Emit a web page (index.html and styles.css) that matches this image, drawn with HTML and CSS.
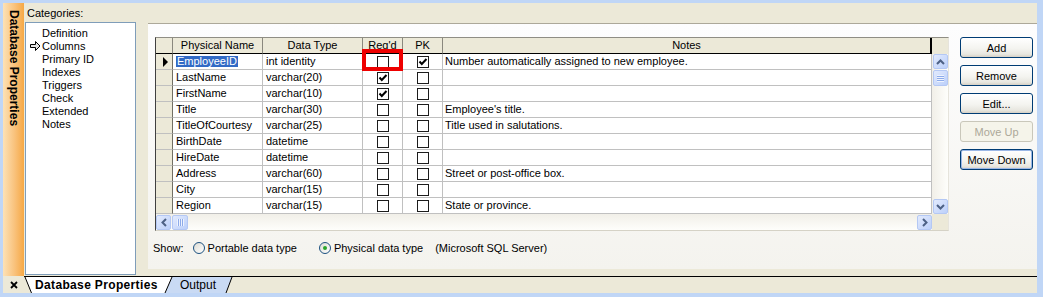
FILE: index.html
```html
<!DOCTYPE html>
<html lang="en">
<head>
    <meta charset="UTF-8">
    <meta name="viewport" content="width=device-width, initial-scale=1.0">
    <title>Database Properties</title>
    <link rel="stylesheet" href="styles.css">
</head>
<body>
<div class="window">
    <div class="main">
        <div class="side-tab"><span>Database Properties</span></div>
        <div class="content">
            <div class="categories">
                <div class="cat-label">Categories:</div>
                <ul class="cat-list">
                    <li><span class="marker"></span>Definition</li>
                    <li><span class="marker"><svg width="11" height="10" viewBox="0 0 11 10"><path d="M0.5 3.5 H5.5 V0.5 L10 5 L5.5 9.5 V6.5 H0.5 Z" fill="#e4e4e4" stroke="#000"/></svg></span>Columns</li>
                    <li><span class="marker"></span>Primary ID</li>
                    <li><span class="marker"></span>Indexes</li>
                    <li><span class="marker"></span>Triggers</li>
                    <li><span class="marker"></span>Check</li>
                    <li><span class="marker"></span>Extended</li>
                    <li><span class="marker"></span>Notes</li>
                </ul>
            </div>
            <div class="panel">
                <div class="grid-area">
                    <div class="grid">
                        <div class="grid-top">
                            <div class="cells">
                                <div class="row head">
                                    <div class="cell"></div>
                                    <div class="cell">Physical Name</div>
                                    <div class="cell">Data Type</div>
                                    <div class="cell">Req'd</div>
                                    <div class="cell">PK</div>
                                    <div class="cell notes">Notes</div>
                                </div>
                                <div class="row">
                                    <div class="cell rowhead"><svg width="6" height="10" viewBox="0 0 6 10"><polygon points="0,0 5,5 0,10" fill="#000"/></svg></div>
                                    <div class="cell"><span class="selected">EmployeeID</span></div>
                                    <div class="cell">int identity</div>
                                    <div class="cell check marked"><span class="chk"></span><span class="callout"></span></div>
                                    <div class="cell check"><span class="chk"><svg width="10" height="10" viewBox="0 0 10 10"><path d="M1.5 4.5 L3.8 7 L8.5 2"/></svg></span></div>
                                    <div class="cell notes">Number automatically assigned to new employee.</div>
                                </div>
                                <div class="row">
                                    <div class="cell rowhead"></div>
                                    <div class="cell">LastName</div>
                                    <div class="cell">varchar(20)</div>
                                    <div class="cell check"><span class="chk"><svg width="10" height="10" viewBox="0 0 10 10"><path d="M1.5 4.5 L3.8 7 L8.5 2"/></svg></span></div>
                                    <div class="cell check"><span class="chk"></span></div>
                                    <div class="cell notes"></div>
                                </div>
                                <div class="row">
                                    <div class="cell rowhead"></div>
                                    <div class="cell">FirstName</div>
                                    <div class="cell">varchar(10)</div>
                                    <div class="cell check"><span class="chk"><svg width="10" height="10" viewBox="0 0 10 10"><path d="M1.5 4.5 L3.8 7 L8.5 2"/></svg></span></div>
                                    <div class="cell check"><span class="chk"></span></div>
                                    <div class="cell notes"></div>
                                </div>
                                <div class="row">
                                    <div class="cell rowhead"></div>
                                    <div class="cell">Title</div>
                                    <div class="cell">varchar(30)</div>
                                    <div class="cell check"><span class="chk"></span></div>
                                    <div class="cell check"><span class="chk"></span></div>
                                    <div class="cell notes">Employee's title.</div>
                                </div>
                                <div class="row">
                                    <div class="cell rowhead"></div>
                                    <div class="cell">TitleOfCourtesy</div>
                                    <div class="cell">varchar(25)</div>
                                    <div class="cell check"><span class="chk"></span></div>
                                    <div class="cell check"><span class="chk"></span></div>
                                    <div class="cell notes">Title used in salutations.</div>
                                </div>
                                <div class="row">
                                    <div class="cell rowhead"></div>
                                    <div class="cell">BirthDate</div>
                                    <div class="cell">datetime</div>
                                    <div class="cell check"><span class="chk"></span></div>
                                    <div class="cell check"><span class="chk"></span></div>
                                    <div class="cell notes"></div>
                                </div>
                                <div class="row">
                                    <div class="cell rowhead"></div>
                                    <div class="cell">HireDate</div>
                                    <div class="cell">datetime</div>
                                    <div class="cell check"><span class="chk"></span></div>
                                    <div class="cell check"><span class="chk"></span></div>
                                    <div class="cell notes"></div>
                                </div>
                                <div class="row">
                                    <div class="cell rowhead"></div>
                                    <div class="cell">Address</div>
                                    <div class="cell">varchar(60)</div>
                                    <div class="cell check"><span class="chk"></span></div>
                                    <div class="cell check"><span class="chk"></span></div>
                                    <div class="cell notes">Street or post-office box.</div>
                                </div>
                                <div class="row">
                                    <div class="cell rowhead"></div>
                                    <div class="cell">City</div>
                                    <div class="cell">varchar(15)</div>
                                    <div class="cell check"><span class="chk"></span></div>
                                    <div class="cell check"><span class="chk"></span></div>
                                    <div class="cell notes"></div>
                                </div>
                                <div class="row">
                                    <div class="cell rowhead"></div>
                                    <div class="cell">Region</div>
                                    <div class="cell">varchar(15)</div>
                                    <div class="cell check"><span class="chk"></span></div>
                                    <div class="cell check"><span class="chk"></span></div>
                                    <div class="cell notes">State or province.</div>
                                </div>
                            </div>
                            <div class="vscroll">
                                <div class="vs-head"></div>
                                <div class="sb-btn"><svg width="9" height="6" viewBox="0 0 9 6"><path d="M1 5 L4.5 1.5 L8 5"/></svg></div>
                                <div class="sb-thumb"><span class="grip"></span></div>
                                <div class="sb-track"></div>
                                <div class="sb-btn"><svg width="9" height="6" viewBox="0 0 9 6"><path d="M1 1 L4.5 4.5 L8 1"/></svg></div>
                            </div>
                        </div>
                        <div class="hscroll-row">
                            <div class="hscroll">
                                <div class="sb-btn"><svg width="6" height="9" viewBox="0 0 6 9"><path d="M5 1 L1.5 4.5 L5 8"/></svg></div>
                                <div class="sb-thumb"><span class="grip"></span></div>
                                <div class="sb-track"></div>
                                <div class="sb-btn"><svg width="6" height="9" viewBox="0 0 6 9"><path d="M1 1 L4.5 4.5 L1 8"/></svg></div>
                            </div>
                            <div class="corner"></div>
                        </div>
                    </div>
                    <div class="show-row">
                        <span class="show-label">Show:</span>
                        <span class="radio"></span>
                        <span class="radio-text">Portable data type</span>
                        <span class="radio on"></span>
                        <span class="radio-text">Physical data type</span>
                        <span class="server">(Microsoft SQL Server)</span>
                    </div>
                </div>
                <div class="buttons">
                    <button class="btn">Add</button>
                    <button class="btn">Remove</button>
                    <button class="btn">Edit...</button>
                    <button class="btn" disabled>Move Up</button>
                    <button class="btn default">Move Down</button>
                </div>
            </div>
        </div>
    </div>
    <div class="tabstrip">
        <div class="close-cell"><svg width="8" height="8" viewBox="0 0 8 8"><path d="M1 1 L7 7 M7 1 L1 7" stroke="#000" stroke-width="1.8"/></svg></div>
        <div class="tabs">
            <svg class="tab-shapes" width="240" height="16" viewBox="0 0 240 16">
                <polygon points="1,0 7.5,16 141,16 148,0" fill="#fff"/>
                <polygon points="141,16 148,0 208,0 202,16" fill="#c9daf4"/>
                <path d="M1 0 L7.5 16 M141 16 L148 0 M208 0 L202 16" stroke="#000" fill="none"/>
            </svg>
            <span class="tab active">Database Properties</span>
            <span class="tab">Output</span>
        </div>
    </div>
</div>
</body>
</html>
```

FILE: styles.css
```css
body {
    margin: 0;
    background-color: #c0d6f6;
    font-family: "Liberation Sans", Arial, sans-serif;
    font-size: 11px;
    color: #000;
}
.window {
    width: 1043px;
    height: 297px;
    box-sizing: border-box;
    padding: 3px 6px 4px 3px;
    display: flex;
    flex-direction: column;
}
.main {
    display: flex;
    height: 273px;
}
.side-tab {
    width: 21px;
    box-sizing: border-box;
    padding-top: 7px;
    display: flex;
    justify-content: center;
    background: linear-gradient(to right, #fde2b6, #f9c27c 55%, #f6a845);
}
.side-tab span {
    writing-mode: vertical-rl;
    font-weight: bold;
    font-size: 12px;
    line-height: 14px;
}
.content {
    flex: 1;
    display: flex;
    background-color: #ece9d8;
}

/* categories list */
.categories {
    width: 112px;
    display: flex;
    flex-direction: column;
}
.cat-label {
    padding: 4px 0 0 3px;
    line-height: 13px;
}
.cat-list {
    flex: 1;
    margin: 2px 0 1px 1px;
    padding: 3px 0 0 0;
    list-style: none;
    background-color: #fff;
    border: 1px solid #7f9db9;
}
.cat-list li {
    display: flex;
    align-items: center;
    height: 13px;
}
.marker {
    width: 16px;
    flex: none;
    display: flex;
}
.marker svg {
    margin-left: 4px;
}

/* columns page */
.panel {
    flex: 1;
    margin: 20px 0 7px 12px;
    padding: 13px 4px 0 7px;
    border-top: 1px solid #aca899;
    background: linear-gradient(#fdfdfe, #f4f3ee);
    display: flex;
    align-items: flex-start;
}
.grid-area {
    width: 794px;
}
.grid {
    height: 194px;
    box-sizing: border-box;
    border: 1px solid;
    border-color: #8f8d84 #e6e4dc #d5d2c6 #404040;
    background-color: #fff;
    display: flex;
    flex-direction: column;
}
.grid-top {
    display: flex;
    height: 176px;
}
.cells {
    width: 776px;
}
.row {
    display: grid;
    grid-template-columns: 17px 90px 100px 40px 40px 489px;
    height: 16px;
}
.cell {
    box-sizing: border-box;
    border-right: 1px solid #c0c0c0;
    border-bottom: 1px solid #c0c0c0;
    padding-left: 3px;
    line-height: 15px;
    white-space: nowrap;
    overflow: hidden;
}
.cell.notes {
    padding-left: 2px;
}
.row.head .cell {
    background-color: #ece9d8;
    border-right-color: #8a887e;
    border-bottom-color: #000;
    padding: 0;
    text-align: center;
}
.row.head .cell.notes {
    border-right: 2px solid #000;
}
.rowhead {
    background-color: #ece9d8;
    border-right-color: #716f64 !important;
    display: flex;
    align-items: center;
    padding: 0 0 0 7px;
}
.selected {
    display: inline-block;
    line-height: 11px;
    padding: 0 1px;
    background-color: #316ac5;
    color: #fff;
}
.cell.check {
    display: flex;
    align-items: center;
    justify-content: center;
    padding: 0;
}
.chk {
    width: 12px;
    height: 12px;
    box-sizing: border-box;
    border: 1px solid #1c1c1c;
    background-color: #fff;
    display: flex;
}
.chk path {
    fill: none;
    stroke: #000;
    stroke-width: 2;
}
.cell.marked {
    position: relative;
    overflow: visible;
}
.callout {
    position: absolute;
    left: -1px;
    top: -5px;
    width: 41px;
    height: 22px;
    box-sizing: border-box;
    border: 4px solid #ee0000;
    z-index: 1;
}

/* scrollbars */
.vscroll {
    width: 16px;
    display: flex;
    flex-direction: column;
    background: linear-gradient(to right, #f1efe8, #fefefb);
}
.vs-head {
    height: 16px;
    flex: none;
    background-color: #ece9d8;
}
.vscroll .sb-btn,
.vscroll .sb-thumb {
    margin-left: 1px;
}
.vscroll .sb-thumb {
    height: 16px;
    margin-top: 1px;
}
.sb-btn,
.sb-thumb {
    width: 15px;
    height: 15px;
    flex: none;
    box-sizing: border-box;
    border: 1px solid #b4c8f4;
    border-radius: 2px;
    background: linear-gradient(135deg, #e2eafd, #bcd0fa);
    display: flex;
    align-items: center;
    justify-content: center;
}
.sb-btn path {
    fill: none;
    stroke: #4d6185;
    stroke-width: 2;
}
.sb-track {
    flex: 1;
}
.grip {
    width: 7px;
    height: 7px;
    background: repeating-linear-gradient(#eef3fe 0 1px, #8dabea 1px 2px);
}
.hscroll-row {
    display: flex;
    height: 16px;
}
.hscroll {
    width: 776px;
    display: flex;
    align-items: flex-end;
    background: linear-gradient(#f1efe8, #fefefb);
}
.hscroll .sb-thumb {
    width: 16px;
    margin-left: 1px;
}
.hscroll .grip {
    background: repeating-linear-gradient(to right, #eef3fe 0 1px, #8dabea 1px 2px);
}
.corner {
    width: 16px;
    background-color: #ece9d8;
}

/* show row */
.show-row {
    display: flex;
    align-items: center;
    height: 16px;
    margin: 9px 0 0 -2px;
}
.show-label {
    margin-right: 9px;
}
.radio {
    width: 12px;
    height: 12px;
    box-sizing: border-box;
    border: 1px solid #1c5180;
    border-radius: 50%;
    background: linear-gradient(135deg, #dcdbd3, #fff);
    display: flex;
    align-items: center;
    justify-content: center;
}
.radio.on {
    margin-left: 22px;
}
.radio.on::after {
    content: "";
    width: 4px;
    height: 4px;
    border-radius: 50%;
    background-color: #2aa52a;
}
.radio-text {
    margin-left: 3px;
}
.server {
    margin-left: 12px;
}

/* buttons */
.buttons {
    margin-left: 11px;
    display: flex;
    flex-direction: column;
    gap: 7px;
}
.btn {
    width: 73px;
    height: 21px;
    box-sizing: border-box;
    padding: 0;
    border: 1px solid #003c74;
    border-radius: 3px;
    background: linear-gradient(#ffffff, #f4f4f0 55%, #e8e7e0 85%, #d6d0c5);
    font-family: "Liberation Sans", Arial, sans-serif;
    font-size: 11px;
    color: #000;
}
.btn:disabled {
    border-color: #c9c7ba;
    background: #f5f4ea;
    color: #aca899;
}
.btn.default {
    box-shadow: inset 0 0 0 1px #9bb7e6;
}

/* bottom tabs */
.tabstrip {
    display: flex;
    height: 17px;
    background-color: #ece9d8;
}
.close-cell {
    width: 21px;
    display: flex;
    align-items: center;
    justify-content: center;
}
.tabs {
    flex: 1;
    position: relative;
    display: flex;
    border-top: 1px solid #000;
}
.tab-shapes {
    position: absolute;
    left: 0;
    top: 0;
}
.tab {
    position: relative;
    line-height: 16px;
    font-size: 12px;
    padding-left: 8px;
}
.tab.active {
    width: 148px;
    box-sizing: border-box;
    padding-left: 11px;
    font-weight: bold;
    letter-spacing: 0.35px;
}
```
